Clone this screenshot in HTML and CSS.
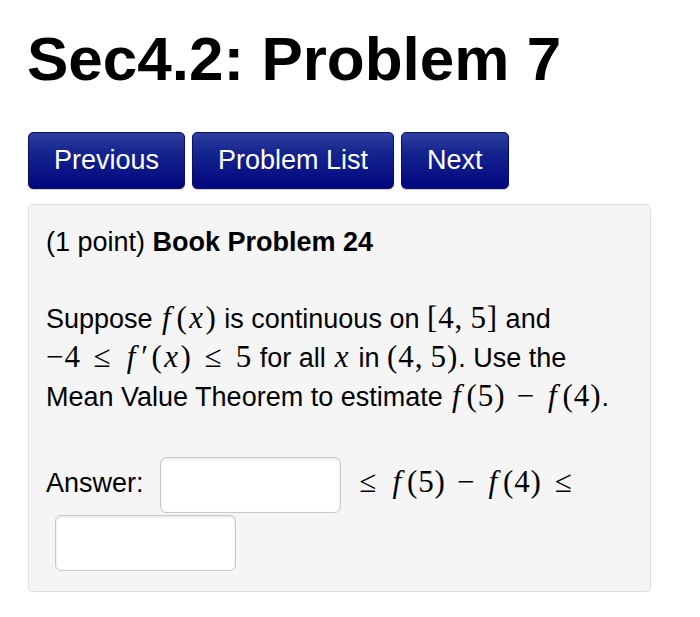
FILE: index.html
```html
<!DOCTYPE html>
<html lang="en">
<head>
  <meta charset="UTF-8">
  <title>Sec4.2: Problem 7</title>
  <link rel="stylesheet" href="styles.css">
</head>
<body>

  <div class="page">
    <h1 class="title">Sec4.2: Problem 7</h1>

    <div class="nav">
      <button class="nav-btn">Previous</button>
      <button class="nav-btn">Problem List</button>
      <button class="nav-btn">Next</button>
    </div>

    <div class="problem">
      <p class="points">(1 point) <b>Book Problem 24</b></p>
      <p class="text">Suppose <span class="math"><i class="f">f</i>(<i class="x">x</i>)</span> is continuous on <span class="math">[4,&thinsp;5]</span> and <span class="math">−4<span class="rel">≤</span><i class="f">f</i><span class="prime">′</span>(<i class="x">x</i>)<span class="rel">≤</span>5</span> for all <span class="math"><i class="x">x</i></span> in <span class="math">(4,&thinsp;5)</span>. Use the Mean Value Theorem to estimate <span class="math"><i class="f">f</i>(5)<span class="bin">−</span><i class="f">f</i>(4)</span>.</p>
      <p class="answer">Answer: <input class="ans" type="text"> <span class="math"><span class="rel">≤</span><i class="f">f</i>(5)<span class="bin">−</span><i class="f">f</i>(4)<span class="rel">≤</span></span> <input class="ans" type="text"></p>
    </div>
  </div>

</body>
</html>
```

FILE: styles.css
```css
body {
  margin: 0;
  background-color: #fff;
  color: #000;
  font-family: "Liberation Sans", Arial, sans-serif;
}

.page {
  padding: 24px 49px 0 28px;
}

.title {
  margin: 0 0 38px -1px;
  font-size: 62px;
  line-height: 70px;
  font-weight: bold;
}

.nav {
  display: flex;
  gap: 7px;
  margin-bottom: 15px;
}

.nav-btn {
  height: 57px;
  padding: 0 25px;
  font-family: "Liberation Sans", Arial, sans-serif;
  font-size: 27px;
  color: #fff;
  border: 1px solid #0b1060;
  border-radius: 5px;
  background: linear-gradient(#2e3ea0 0%, #15258e 35%, #02067f 100%);
  box-shadow: 0 1px 1px rgba(0, 0, 0, 0.2);
  cursor: pointer;
}

.problem {
  background-color: #f5f5f5;
  border: 1px solid #dedede;
  border-radius: 5px;
  padding: 18px 31px 19px 17px;
  font-size: 27px;
  line-height: 39px;
  box-shadow: 0 1px 1px rgba(0, 0, 0, 0.04);
}

.problem p {
  margin: 0;
}

.points {
  margin-bottom: 38px !important;
}

.text {
  margin-bottom: 39px !important;
}

.math {
  font-family: "Liberation Serif", "Times New Roman", serif;
  font-size: 31px;
  line-height: 30px;
  letter-spacing: 0.03em;
  white-space: nowrap;
}

.math i {
  font-style: italic;
}

.math .f {
  padding: 0 0.16em 0 0.06em;
}

.math .x {
  padding: 0 0.05em;
}

.prime {
  padding-right: 0.08em;
}

.rel {
  margin: 0 0.42em;
}

.bin {
  margin: 0 0.36em;
}

.answer .rel:first-child {
  margin-left: 0;
}

.answer .rel:last-child {
  margin-right: 0;
}

.ans {
  box-sizing: border-box;
  width: 181px;
  height: 56px;
  margin: 1px 11px 1px 9px;
  padding: 0;
  border: 1px solid #c9c9c9;
  border-radius: 6px;
  background-color: #fff;
  box-shadow: inset 0 1px 3px rgba(0, 0, 0, 0.12);
  vertical-align: middle;
}
```
